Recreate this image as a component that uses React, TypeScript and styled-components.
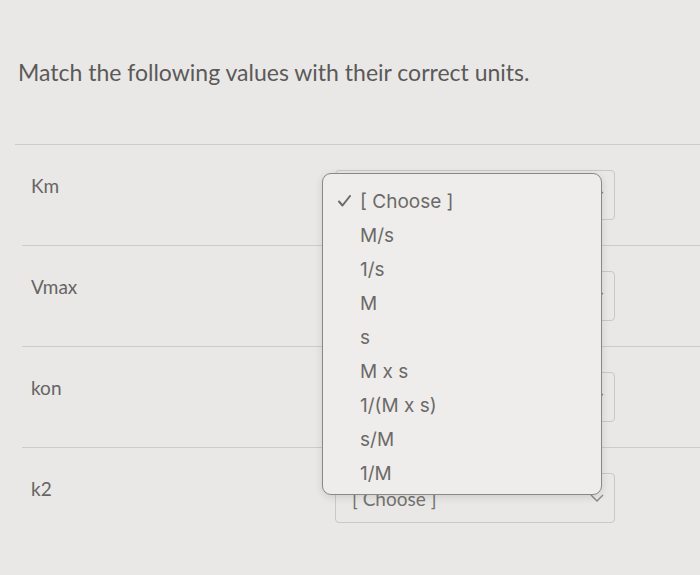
import React from 'react'
import styled, { createGlobalStyle } from 'styled-components'

const GlobalStyle = createGlobalStyle`
    body {
        margin: 0;
        background: #e9e8e6;
        font-family: Lato, "Open Sans", sans-serif;
    }
`

const Page = styled.div`
    position: relative;
    width: 700px;
    height: 575px;
    overflow: hidden;
`

const Title = styled.h1`
    margin: 0;
    padding: 58px 0 0 18px;
    font-size: 23px;
    line-height: 28px;
    font-weight: 400;
    color: #5b5a59;
`

const Table = styled.div`
    margin: 58px 0 0 15px;
    border-top: 1px solid #cdccca;
`

const Row = styled.div<{ last?: boolean }>`
    display: grid;
    grid-template-columns: 313px 1fr;
    margin-left: 7px;
    padding: 25px 0;
    border-bottom: ${props => props.last ? 'none' : '1px solid #cdccca'};
`

const Label = styled.div`
    padding: 5px 0 0 9px;
    font-size: 19px;
    line-height: 22px;
    color: #666564;
`

const Select = styled.div`
    width: 280px;
    height: 50px;
    box-sizing: border-box;
    border: 1px solid #c9c8c6;
    border-radius: 4px;
    display: flex;
    align-items: center;
    justify-content: space-between;
    padding: 0 10px 0 16px;
    font-size: 19px;
    color: #747371;
`

const Menu = styled.div`
    position: absolute;
    left: 322px;
    top: 173px;
    width: 280px;
    box-sizing: border-box;
    padding: 10px 0 4px 15px;
    border: 1px solid #898886;
    border-radius: 9px;
    background: #eeedeb;
    box-shadow: 0 2px 8px rgba(0, 0, 0, 0.12);
    font-family: Inter, "Open Sans", sans-serif;
`

const Item = styled.div`
    display: flex;
    align-items: center;
    height: 34px;
    font-size: 19px;
    color: #6b6a68;
`

const CheckSlot = styled.span`
    width: 22px;
    display: flex;
    align-items: center;
`

const options = ['[ Choose ]', 'M/s', '1/s', 'M', 's', 'M x s', '1/(M x s)', 's/M', '1/M']
const values = ['Km', 'Vmax', 'kon', 'k2']

const Chevron = () => (
    <svg width="14" height="8" viewBox="0 0 14 8">
        <polyline points="1,1 7,7 13,1" fill="none" stroke="#8a8987" strokeWidth="1.4" />
    </svg>
)

const Check = () => (
    <svg width="13" height="12" viewBox="0 0 13 12">
        <polyline points="1,6.5 4.5,10.5 12,1" fill="none" stroke="#6b6a68" strokeWidth="2" strokeLinecap="round" strokeLinejoin="round" />
    </svg>
)

const App: React.FC = () => {
    return (
        <Page>
            <GlobalStyle />
            <Title>Match the following values with their correct units.</Title>
            <Table>
                {values.map((v, ind) => (
                    <Row key={v} last={ind === values.length - 1}>
                        <Label>{v}</Label>
                        <Select>
                            <span>[ Choose ]</span>
                            <Chevron />
                        </Select>
                    </Row>
                ))}
            </Table>
            <Menu>
                {options.map((opt, ind) => (
                    <Item key={opt}>
                        <CheckSlot>{ind === 0 && <Check />}</CheckSlot>
                        {opt}
                    </Item>
                ))}
            </Menu>
        </Page>
    )
}

export default App
